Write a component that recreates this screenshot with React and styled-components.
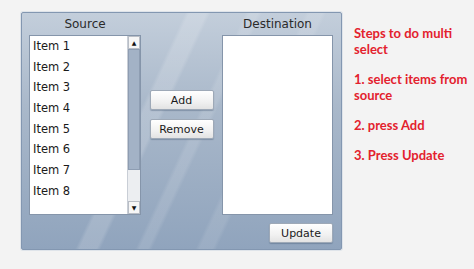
import React from "react";
import styled, { createGlobalStyle } from "styled-components";

const GlobalStyle = createGlobalStyle`
  body {
    margin: 0;
    background: #f3f3f3;
    font-family: "DejaVu Sans", Verdana, sans-serif;
  }
`;

const Page = styled.div`
  display: flex;
  align-items: flex-start;
  width: 474px;
  height: 269px;
  padding: 12px 0 0 21px;
  box-sizing: border-box;
  gap: 12px;
`;

const Panel = styled.div`
  width: 321px;
  height: 238px;
  box-sizing: border-box;
  border: 1px solid #8397b1;
  border-radius: 2px;
  box-shadow: 0 0 0 1px #dfe4ea;
  padding: 2px 8px 0 7px;
  background:
    linear-gradient(115deg, transparent 38%, rgba(255,255,255,0.16) 39%, rgba(255,255,255,0.16) 43%, transparent 44%),
    linear-gradient(115deg, transparent 52%, rgba(255,255,255,0.12) 53%, rgba(255,255,255,0.12) 55%, transparent 56%),
    linear-gradient(115deg, transparent 66%, rgba(255,255,255,0.1) 67%, rgba(255,255,255,0.1) 70%, transparent 71%),
    linear-gradient(180deg, #c3cedb 0%, #a9b8ca 40%, #90a4bd 100%);
  display: grid;
  grid-template-columns: 112px 1fr 111px;
  grid-template-rows: 20px 180px auto;
`;

const Heading = styled.div`
  font-size: 12px;
  color: #2a2a2a;
  text-align: center;
  line-height: 18px;
`;

const ListBox = styled.div`
  background: #fff;
  border: 1px solid #8595aa;
  box-sizing: border-box;
  display: flex;
  height: 180px;
`;

const Items = styled.div`
  flex: 1;
  padding: 0 0 0 3px;
`;

const ItemRow = styled.div`
  font-size: 11.5px;
  color: #1a1a1a;
  height: 20.7px;
  line-height: 20px;
`;

const ScrollBar = styled.div`
  width: 12px;
  display: flex;
  flex-direction: column;
  border-left: 1px solid #c9ced6;
  background: #eceef1;
`;

const Arrow = styled.div`
  height: 11px;
  border: 1px solid #b9bec6;
  background: #f6f6f6;
  display: flex;
  align-items: center;
  justify-content: center;
  font-size: 6px;
  color: #111;
`;

const Thumb = styled.div`
  height: 121px;
  background: #a3b2c6;
  border: 1px solid #8e9db2;
  box-sizing: border-box;
`;

const Middle = styled.div`
  display: flex;
  flex-direction: column;
  align-items: center;
  gap: 9px;
  padding-top: 55px;
`;

const Button = styled.button`
  width: 64px;
  height: 20px;
  padding: 0;
  font-family: "DejaVu Sans", Verdana, sans-serif;
  font-size: 11px;
  color: #1a1a1a;
  background: linear-gradient(180deg, #ffffff 0%, #f1f1f1 60%, #e3e3e3 100%);
  border: 1px solid #9ea9b7;
  border-radius: 2px;
  box-shadow: 0 1px 1px rgba(60, 80, 110, 0.35);
`;

const Footer = styled.div`
  grid-column: 3;
  display: flex;
  justify-content: flex-end;
  padding-top: 8px;
`;

const Notes = styled.div`
  padding-top: 13px;
  font-family: Lato, "Open Sans", sans-serif;
  font-weight: 700;
  font-size: 13px;
  line-height: 16px;
  color: #e3212d;
  width: 118px;
`;

const Note = styled.p`
  margin: 0 0 14px;
`;

const items = ["Item 1", "Item 2", "Item 3", "Item 4", "Item 5", "Item 6", "Item 7", "Item 8"];

export default function App() {
  return (
    <Page>
      <GlobalStyle />
      <Panel>
        <Heading>Source</Heading>
        <div />
        <Heading>Destination</Heading>
        <ListBox>
          <Items>
            {items.map((it) => (
              <ItemRow key={it}>{it}</ItemRow>
            ))}
          </Items>
          <ScrollBar>
            <Arrow>▲</Arrow>
            <Thumb />
            <div style={{ flex: 1 }} />
            <Arrow>▼</Arrow>
          </ScrollBar>
        </ListBox>
        <Middle>
          <Button>Add</Button>
          <Button>Remove</Button>
        </Middle>
        <ListBox />
        <Footer>
          <Button>Update</Button>
        </Footer>
      </Panel>
      <Notes>
        <Note>Steps to do multi select</Note>
        <Note>1. select items from source</Note>
        <Note>2. press Add</Note>
        <Note>3. Press Update</Note>
      </Notes>
    </Page>
  );
}
